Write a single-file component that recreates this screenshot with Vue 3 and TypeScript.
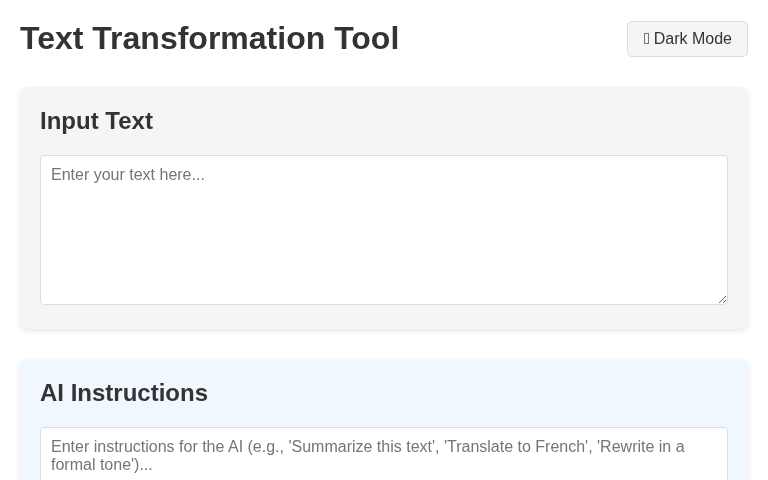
<script setup lang="ts">
const title: string = 'Text Transformation Tool'
</script>

<template>
  <div class="page">
    <header class="header">
      <h1>{{ title }}</h1>
      <button class="theme" type="button"><span class="tofu" aria-hidden="true"></span> Dark Mode</button>
    </header>
    <section class="card">
      <h2>Input Text</h2>
      <textarea placeholder="Enter your text here..."></textarea>
    </section>
    <section class="card ai">
      <h2>AI Instructions</h2>
      <textarea placeholder="Enter instructions for the AI (e.g., 'Summarize this text', 'Translate to French', 'Rewrite in a formal tone')..."></textarea>
    </section>
  </div>
</template>

<style>
html, body { margin: 0; background: #fff; }
</style>

<style scoped>
.page {
  padding: 20px;
  font-family: "Liberation Sans", Arial, sans-serif;
  color: #333;
  will-change: transform;
}
.header {
  display: flex;
  justify-content: space-between;
  align-items: center;
  margin-bottom: 30px;
}
h1 {
  margin: 0;
  font-size: 32px;
  font-weight: 700;
}
.theme {
  padding: 8px 15px 8px 16px;
  font-family: inherit;
  font-size: 16px;
  color: #333;
  background: #f5f5f5;
  border: 1px solid #ddd;
  border-radius: 5px;
}
.tofu {
  display: inline-block;
  box-sizing: border-box;
  width: 5px;
  height: 11px;
  border: 1px solid #777;
}
.card {
  margin-bottom: 30px;
  padding: 20px;
  background: #f5f5f5;
  border-radius: 8px;
  box-shadow: 0 2px 5px rgba(0, 0, 0, 0.1);
}
.ai { background: #f0f7ff; }
h2 {
  margin: 0 0 20px;
  font-size: 24px;
  font-weight: 700;
}
textarea {
  box-sizing: border-box;
  width: 100%;
  height: 150px;
  padding: 10px;
  font-family: inherit;
  font-size: 16px;
  color: #333;
  background: #fff;
  border: 1px solid #ddd;
  border-radius: 4px;
  resize: vertical;
}
textarea::placeholder { color: #757575; }
</style>
